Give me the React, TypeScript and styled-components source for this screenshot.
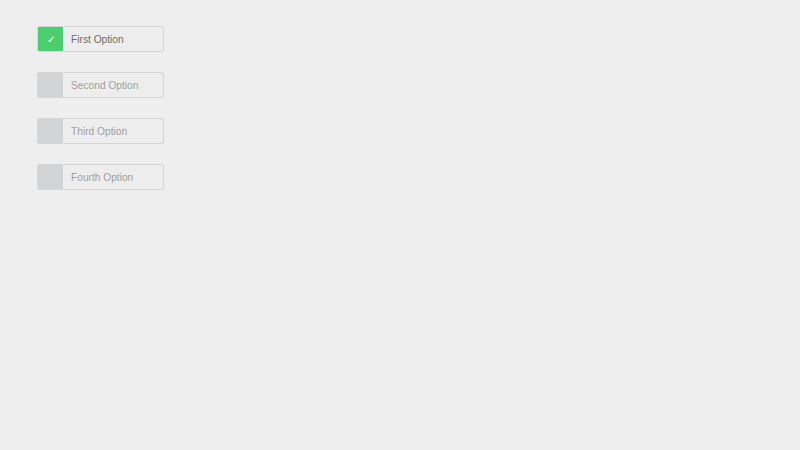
import { useState } from 'react';
import styled, { createGlobalStyle } from 'styled-components';

const GlobalStyle = createGlobalStyle`
  html, body {
    margin: 0;
    background: #eeeeee;
    font-family: "Liberation Sans", Arial, sans-serif;
  }
`;

const Page = styled.div`
  display: flex;
  flex-direction: column;
  gap: 20px;
  padding: 26px 0 0 37px;
  min-height: 100vh;
  box-sizing: border-box;
`;

const Option = styled.label`
  display: flex;
  align-items: stretch;
  width: 127px;
  height: 26px;
  box-sizing: border-box;
  border: 1px solid #d6d6d6;
  border-radius: 2px;
  background: #ededed;
  cursor: pointer;
  overflow: hidden;
`;

const Box = styled.span<{ $checked: boolean }>`
  display: flex;
  align-items: center;
  justify-content: center;
  width: 25px;
  flex: 0 0 25px;
  background: ${(p) => (p.$checked ? '#4cce70' : '#d2d4d6')};
  color: #ffffff;
  font-size: 10px;
`;

const Label = styled.span<{ $checked: boolean }>`
  display: flex;
  align-items: center;
  padding: 1px 0 0 8px;
  font-size: 10.2px;
  color: ${(p) => (p.$checked ? '#6e6e6e' : '#a0a0a0')};
`;

const options = ['First Option', 'Second Option', 'Third Option', 'Fourth Option'];

export default function App() {
  const [selected, setSelected] = useState(0);

  return (
    <>
      <GlobalStyle />
      <Page>
        {options.map((name, i) => (
          <Option key={name} onClick={() => setSelected(i)}>
            <Box $checked={selected === i}>{selected === i ? '✓' : ''}</Box>
            <Label $checked={selected === i}>{name}</Label>
          </Option>
        ))}
      </Page>
    </>
  );
}
